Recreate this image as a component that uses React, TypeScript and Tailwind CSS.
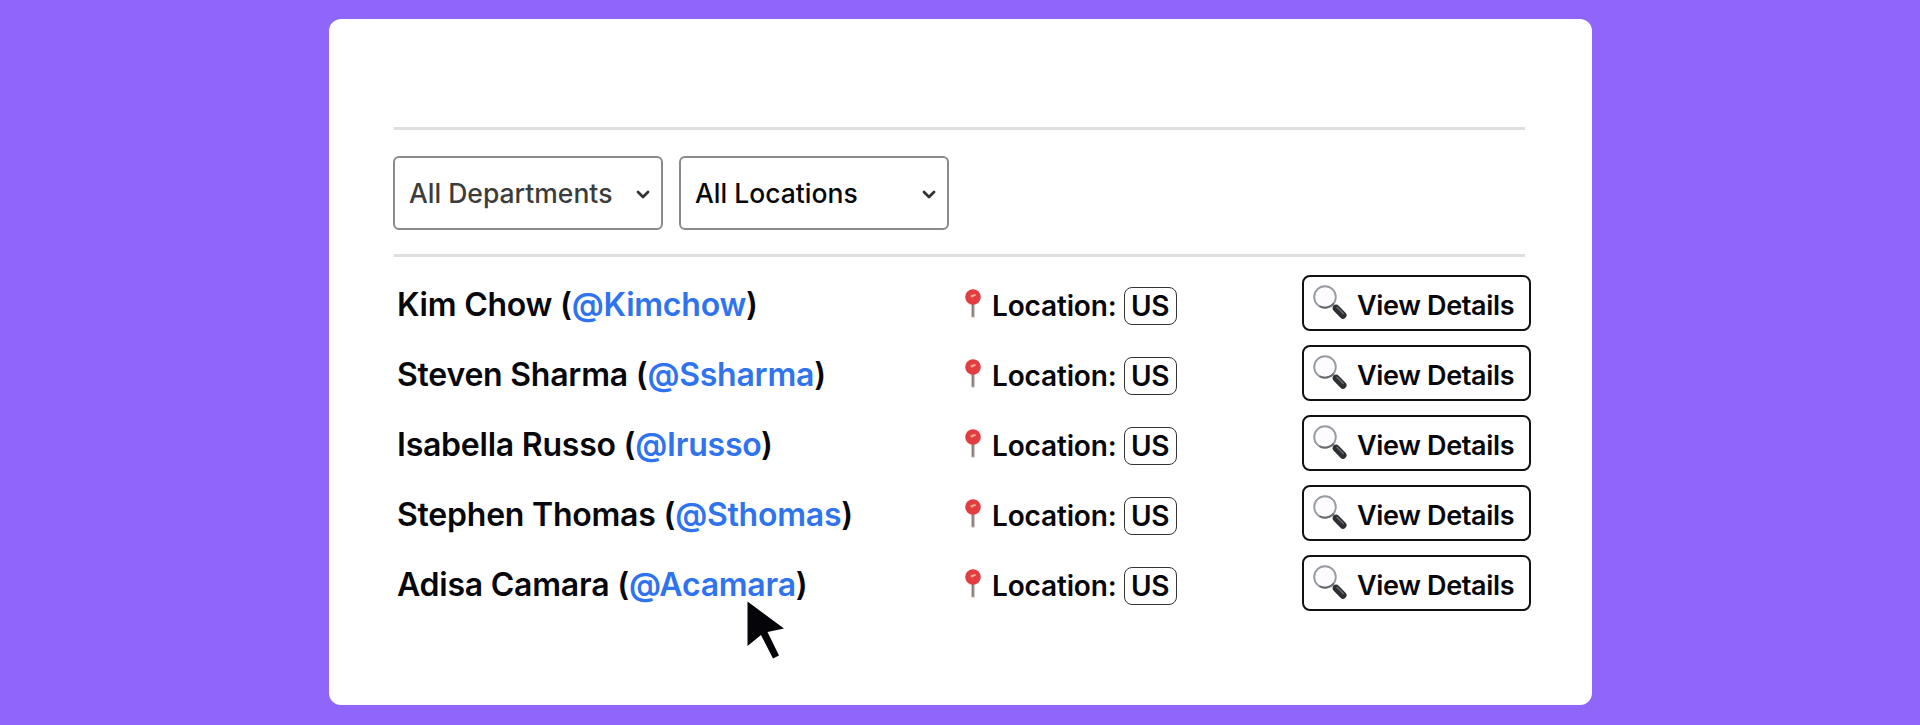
import React from "react";

const people = [
  { name: "Kim Chow", handle: "@Kimchow", country: "US" },
  { name: "Steven Sharma", handle: "@Ssharma", country: "US" },
  { name: "Isabella Russo", handle: "@Irusso", country: "US" },
  { name: "Stephen Thomas", handle: "@Sthomas", country: "US" },
  { name: "Adisa Camara", handle: "@Acamara", country: "US" },
];

function PinIcon() {
  return (
    <svg width="16" height="30" viewBox="0 0 16 30" className="mt-0.5 shrink-0">
      <rect x="6.4" y="14" width="3.2" height="14.5" rx="1.2" fill="#aaa29c" />
      <rect x="7" y="14" width="1.4" height="13" fill="#857b76" />
      <circle cx="8" cy="8" r="7.8" fill="#e23e42" />
      <path d="M5.8 7l3.2-1.2M6.8 8l3.6-2" stroke="#f7b39a" strokeWidth="1.2" strokeLinecap="round" />
    </svg>
  );
}

function MagnifierIcon() {
  return (
    <svg width="34" height="34" viewBox="0 0 34 34" className="-mt-[3px] shrink-0">
      <path d="M19.5 19.5l3 3" stroke="#8b8f92" strokeWidth="2.6" />
      <path d="M23.2 23.2l6.8 7" stroke="#2c2e31" strokeWidth="7" strokeLinecap="round" />
      <path d="M24 22.2l6.2 6.4" stroke="#696d70" strokeWidth="1.5" strokeLinecap="round" />
      <circle cx="12" cy="12" r="10.8" fill="#fdfbfd" stroke="#979ca3" strokeWidth="1.9" />
      <path d="M20.6 18.4a10.8 10.8 0 0 1-14 2.8" fill="none" stroke="#65696d" strokeWidth="1.7" />
    </svg>
  );
}

function Select({ label, color }: { label: string; color: string }) {
  return (
    <button className="flex h-[74px] w-[270px] items-center justify-between rounded-md border-2 border-[#8a8a8a] pr-[11px] pl-3.5">
      <span className={`text-[26.5px] leading-8 font-medium ${color}`}>{label}</span>
      <svg width="14" height="10" viewBox="0 0 14 10" className="mt-[3px]">
        <path d="M2 2l5 5 5-5" fill="none" stroke="#333" strokeWidth="2.8" strokeLinecap="round" strokeLinejoin="round" />
      </svg>
    </button>
  );
}

export default function App() {
  return (
    <div className="flex h-[725px] w-[1920px] justify-center bg-[#9066fa] pt-[19px] pl-px font-['Inter',sans-serif] text-[#08080c]">
      <div className="relative h-[686px] w-[1263px] rounded-xl bg-white pt-[108px] pl-16">
        <div className="ml-px h-[3px] w-[1131px] bg-[#dfdfdf]" />
        <div className="flex gap-4 pt-[26px] pb-6">
          <Select label="All Departments" color="text-[#3c3c3c]" />
          <Select label="All Locations" color="text-[#08080c]" />
        </div>
        <div className="ml-px h-[3px] w-[1131px] bg-[#dfdfdf]" />

        <div className="flex flex-col gap-3.5 pt-[18px]">
          {people.map(person => (
            <div key={person.handle} className="flex h-14 items-center">
              <div className="w-[572px] pt-[3px] pl-1 text-[32px] leading-10 font-semibold tracking-[-0.23px] whitespace-nowrap">
                {person.name} (<a className="text-[#2f73ee]">{person.handle}</a>)
              </div>
              <div className="flex w-[337px] items-center text-[28px] leading-8 font-semibold">
                <PinIcon />
                <span className="ml-[11px] pt-1.5 tracking-[-0.15px]">Location:</span>
                <span className="mt-[5px] ml-[7px] flex h-[38px] w-[53px] items-center justify-center rounded-lg border border-[#333] pt-px tracking-[-0.5px]">
                  {person.country}
                </span>
              </div>
              <button className="flex h-14 w-[229px] items-center rounded-lg border-2 border-[#111] pl-[9px] text-[27px] font-semibold whitespace-nowrap">
                <MagnifierIcon />
                <span className="ml-2.5 pt-[7px] tracking-[-0.35px]">View Details</span>
              </button>
            </div>
          ))}
        </div>

        <svg width="38" height="58" viewBox="0 0 38 58" className="absolute top-[582px] left-[418px]">
          <path d="M0.5 0.5L37 27.5L20.5 31L32 54.5L26 57.5L14 34L0.5 45Z" fill="#050509" />
        </svg>
      </div>
    </div>
  );
}
